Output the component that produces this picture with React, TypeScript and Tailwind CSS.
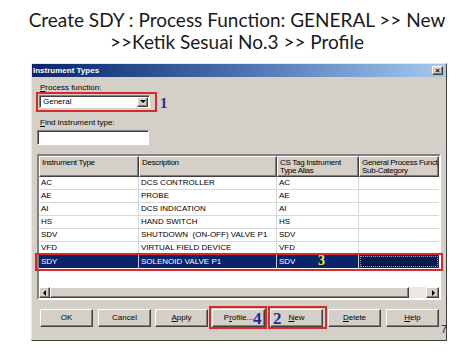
import React from "react";

const rows = [
  { type: "AC", desc: "DCS CONTROLLER", alias: "AC" },
  { type: "AE", desc: "PROBE", alias: "AE" },
  { type: "AI", desc: "DCS INDICATION", alias: "AI" },
  { type: "HS", desc: "HAND SWITCH", alias: "HS" },
  { type: "SDV", desc: "SHUTDOWN  (ON-OFF) VALVE P1", alias: "SDV" },
  { type: "VFD", desc: "VIRTUAL FIELD DEVICE", alias: "VFD" },
];

const raised =
  "bg-[#d4d0c8] border border-t-white border-l-white border-r-[#404040] border-b-[#404040] shadow-[inset_-1px_-1px_0_#808080]";

function Button({ label, u }: { label: string; u?: number }) {
  const i = u ?? -1;
  return (
    <div className={`${raised} w-[53px] h-[18px] flex items-center justify-center text-[8px] text-black`}>
      {i < 0 ? (
        label
      ) : (
        <span>
          {label.slice(0, i)}
          <span className="underline">{label[i]}</span>
          {label.slice(i + 1)}
        </span>
      )}
    </div>
  );
}

function Arrow({ dir }: { dir: "down" | "left" | "right" }) {
  const pts =
    dir === "down" ? "1,2 7,2 4,5" : dir === "left" ? "5,1 5,7 2,4" : "3,1 3,7 6,4";
  return (
    <svg width="8" height="8" viewBox="0 0 8 8">
      <polygon points={pts} fill="#000" />
    </svg>
  );
}

const numCls = "font-['Liberation_Serif',serif] font-bold text-[#1c2ca0] leading-none";

export default function App() {
  return (
    <div className="relative w-[474px] h-[355px] bg-white overflow-hidden font-['Liberation_Sans',Arial,sans-serif]">
      <div className="pt-[9px] text-center text-[19px] leading-[22px] text-[#1a1a1a] font-['Lato',sans-serif]">
        <div className="h-[22px]">Create SDY : Process Function: GENERAL &gt;&gt; New</div>
        <div className="h-[22px]">&gt;&gt;Ketik Sesuai No.3 &gt;&gt; Profile</div>
      </div>

      {/* dialog */}
      <div className="ml-[31px] mt-[10px] w-[416px] h-[278px] bg-[#d4d0c8] border border-t-[#e8e8e8] border-l-[#e8e8e8] border-r-[#404040] border-b-[#404040] flex flex-col">
        <div className="h-[13px] bg-gradient-to-r from-[#0a246a] via-[#4a70b0] to-[#a6caf0] flex items-center justify-between pl-[1px] pr-[3px]">
          <span className="text-white text-[8px] font-bold leading-none">Instrument Types</span>
          <div className={`${raised} w-[11px] h-[9px] flex items-center justify-center text-[8px] font-bold leading-none text-black`}>
            ×
          </div>
        </div>

        <div className="px-[5px] text-[8px] text-black leading-[10px]">
          <div className="mt-[6px] pl-[3px]">
            <span className="underline">P</span>rocess function:
          </div>
          <div className="relative mt-[2px] ml-[2px] w-[111px] h-[13px] bg-white border border-t-[#808080] border-l-[#808080] border-r-white border-b-white shadow-[inset_1px_1px_0_#404040] flex items-center justify-between pl-[3px] pr-[1px]">
            <span>General</span>
            <div className={`${raised} w-[11px] h-[10px] flex items-center justify-center`}>
              <Arrow dir="down" />
            </div>
            <div className="absolute left-[-4px] top-[-4px] w-[121px] h-[20px] border-2 border-[#d62a2a]" />
            <div className={`absolute left-[120px] top-[0px] text-[15px] ${numCls}`}>1</div>
          </div>

          <div className="mt-[10px] pl-[3px]">
            <span className="underline">F</span>ind instrument type:
          </div>
          <div className="mt-[2px] w-[112px] h-[15px] bg-white border border-t-[#808080] border-l-[#808080] border-r-white border-b-white shadow-[inset_1px_1px_0_#404040]" />

          {/* list view */}
          <div className="mt-[9px] w-[404px] h-[146px] bg-white border-2 border-t-[#808080] border-l-[#808080] border-r-white border-b-white flex flex-col">
            <div className="flex h-[21px] text-[8px] leading-[8px] tracking-[-0.3px]">
              {[
                ["Instrument Type", "w-[100px]"],
                ["Description", "w-[138px]"],
                ["CS Tag Instrument\nType Alias", "w-[82px]"],
                ["General Process Funct\nSub-Category", "w-[80px]"],
              ].map(([t, w]) => (
                <div key={t} className={`${w} ${raised} pl-[2px] pt-[2px] whitespace-pre overflow-hidden`}>
                  {t}
                </div>
              ))}
            </div>
            {rows.map((r) => (
              <div key={r.type} className="flex h-[13px] border-b border-[#d8d8d8] text-[8px] leading-[12px]">
                <div className="w-[100px] pl-[2px] border-r border-[#d8d8d8]">{r.type}</div>
                <div className="w-[138px] pl-[2px] border-r border-[#d8d8d8] whitespace-pre overflow-hidden">{r.desc}</div>
                <div className="w-[82px] pl-[2px] border-r border-[#d8d8d8]">{r.alias}</div>
                <div className="w-[80px]" />
              </div>
            ))}
            <div className="relative flex h-[13px] bg-[#0a246a] text-white text-[8px] leading-[13px]">
              <div className="w-[100px] pl-[2px] border-r border-[#c8c8d8]">SDY</div>
              <div className="w-[138px] pl-[2px] border-r border-[#c8c8d8]">SOLENOID VALVE P1</div>
              <div className="w-[82px] pl-[2px] border-r border-[#c8c8d8] relative">
                SDV
                <span className="absolute left-[41px] top-[-1px] text-[14px] font-bold leading-none text-[#f4f020] font-['Liberation_Serif',serif]">
                  3
                </span>
              </div>
              <div className="w-[80px] p-[1px]">
                <div className="h-full bg-[#081a4c] border border-dotted border-[#9aa0b8]" />
              </div>
              <div className="absolute left-[-4px] top-[-2px] w-[408px] h-[18px] border-2 border-[#d62a2a]" />
            </div>
            <div className="flex-1" />
            <div className="flex h-[11px] bg-[#ece9e4]">
              <div className={`${raised} w-[11px] flex items-center justify-center`}>
                <Arrow dir="left" />
              </div>
              <div className={`${raised} w-[359px]`} />
              <div className="w-[17px]" />
              <div className={`${raised} w-[13px] flex items-center justify-center`}>
                <Arrow dir="right" />
              </div>
            </div>
          </div>

          {/* buttons */}
          <div className="flex mt-[9px] pl-[3px]">
            <Button label="OK" />
            <div className="ml-[5px]"><Button label="Cancel" /></div>
            <div className="ml-[4px]"><Button label="Apply" u={0} /></div>
            <div className="ml-[4px] relative">
              <Button label="Profile..." u={1} />
              <div className="absolute left-[-3px] top-[-3px] w-[58px] h-[23px] border-2 border-[#d62a2a]" />
              <div className={`absolute left-[41px] top-[1px] text-[17px] ${numCls}`}>4</div>
            </div>
            <div className="ml-[5px] relative">
              <Button label="New" u={0} />
              <div className="absolute left-[-2px] top-[-3px] w-[59px] h-[23px] border-2 border-[#d62a2a]" />
              <div className={`absolute left-[3px] top-[1px] text-[17px] ${numCls}`}>2</div>
            </div>
            <div className="ml-[5px]"><Button label="Delete" u={0} /></div>
            <div className="ml-[5px]"><Button label="Help" u={0} /></div>
          </div>
        </div>
      </div>
      <div className="absolute left-[441px] top-[324px] text-[11px] leading-none text-[#222]">7</div>
    </div>
  );
}
